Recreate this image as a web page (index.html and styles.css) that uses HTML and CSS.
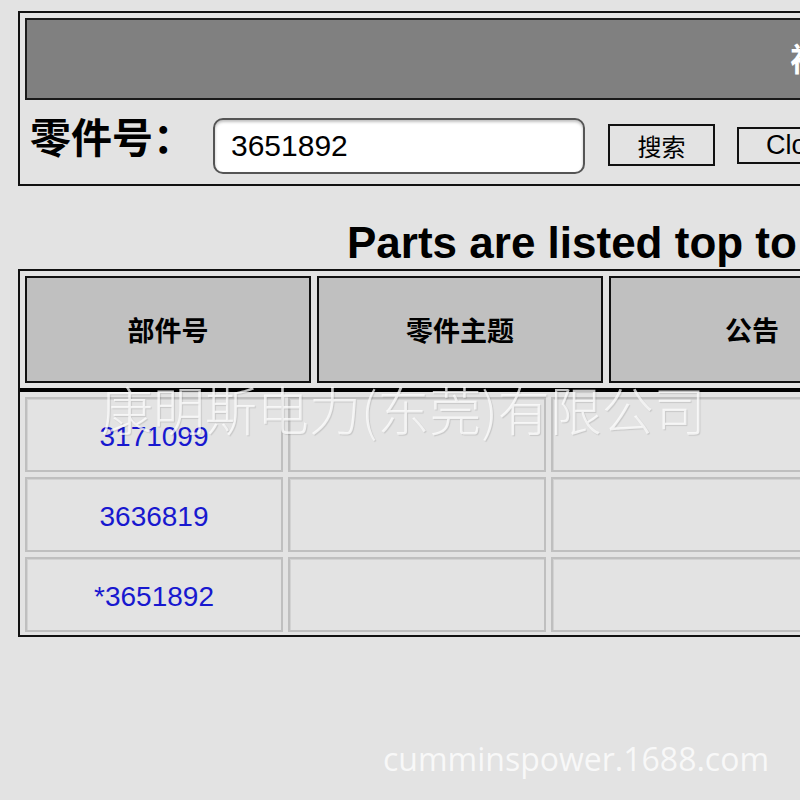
FILE: index.html
```html
<!DOCTYPE html>
<html lang="zh-CN">
<head>
<meta charset="utf-8">
<title>零件查询</title>
<link rel="stylesheet" href="styles.css">
</head>
<body>
<div class="page">
  <div class="search-box">
    <div class="banner"><span class="banner-title">视图零件查询</span></div>
    <div class="search-row">
      <span class="label">零件号：</span>
      <input class="part-input" type="text" value="3651892">
      <button class="btn btn-search">搜索</button>
      <button class="btn btn-close">Close</button>
    </div>
  </div>

  <h1 class="title">Parts are listed top to bottom</h1>

  <div class="parts">
    <div class="thead">
      <div class="th">部件号</div>
      <div class="th">零件主题</div>
      <div class="th">公告</div>
    </div>
    <div class="tbody">
      <div class="tr">
        <div class="td"><a class="link" href="#">3171099</a></div>
        <div class="td"></div>
        <div class="td"></div>
      </div>
      <div class="tr">
        <div class="td"><a class="link" href="#">3636819</a></div>
        <div class="td"></div>
        <div class="td"></div>
      </div>
      <div class="tr">
        <div class="td"><a class="link" href="#">*3651892</a></div>
        <div class="td"></div>
        <div class="td"></div>
      </div>
    </div>
  </div>
</div>

<div class="wm wm-company">康明斯电力(东莞)有限公司</div>
<div class="wm wm-site">cumminspower.1688.com</div>
</body>
</html>
```

FILE: styles.css
```css
html, body {
  margin: 0;
  padding: 0;
}
body {
  width: 800px;
  height: 800px;
  overflow: hidden;
  background: #e3e3e3;
  font-family: "Liberation Sans", Arial, "Noto Sans CJK SC", sans-serif;
  color: #000;
  position: relative;
}
.page {
  padding: 11px 0 0 18px;
}

/* search box */
.search-box {
  width: 1200px;
  height: 175px;
  box-sizing: border-box;
  border: 2px solid #111;
  border-right: none;
  padding: 5px 0 0 5px;
}
.banner {
  height: 82px;
  box-sizing: border-box;
  background: #808080;
  border: 2px solid #1a1a1a;
  position: relative;
}
.banner-title {
  position: absolute;
  left: 763px;
  top: 24px;
  color: #fff;
  font-weight: bold;
  font-size: 32px;
  line-height: 32px;
  white-space: nowrap;
}
.search-row {
  height: 84px;
  display: flex;
  align-items: flex-start;
}
.label {
  margin-left: 5px;
  margin-top: 14px;
  font-size: 41px;
  line-height: 50px;
  font-weight: bold;
  width: 183px;
  white-space: nowrap;
}
.part-input {
  margin-top: 18px;
  width: 372px;
  height: 56px;
  box-sizing: border-box;
  border: 2px solid #555;
  border-radius: 10px;
  background: #fff;
  box-shadow: inset 0 2px 3px rgba(0, 0, 0, 0.25);
  padding: 0 0 0 16px;
  font-family: "Liberation Sans", Arial, sans-serif;
  font-size: 30px;
  color: #000;
  outline: none;
}
.btn {
  box-sizing: border-box;
  background: #e3e3e3;
  border: 2px solid #111;
  border-radius: 0;
  color: #000;
  padding: 0;
  font-family: "Liberation Sans", Arial, "Noto Sans CJK SC", sans-serif;
}
.btn-search {
  margin-left: 23px;
  margin-top: 24px;
  width: 107px;
  height: 42px;
  font-size: 24px;
}
.btn-close {
  margin-left: 22px;
  margin-top: 27px;
  width: 130px;
  height: 37px;
  font-size: 27px;
  text-align: left;
  padding-left: 27px;
}

/* title */
.title {
  margin: 32px 0 1px 329px;
  font-size: 44px;
  line-height: 50px;
  height: 50px;
  font-weight: bold;
  white-space: nowrap;
}

/* parts table */
.parts {
  width: 1200px;
  box-sizing: border-box;
  border: 2px solid #111;
  border-right: none;
}
.thead {
  display: flex;
  gap: 6px;
  padding: 5px;
}
.th {
  width: 286px;
  height: 107px;
  box-sizing: border-box;
  flex: none;
  background: #c0c0c0;
  border: 2px solid #111;
  display: flex;
  align-items: center;
  justify-content: center;
  font-family: "Noto Sans CJK SC", sans-serif;
  font-size: 27px;
  font-weight: bold;
}
.tbody {
  border-top: 4px solid #000;
  padding: 5px 5px 3px 5px;
  display: flex;
  flex-direction: column;
  gap: 5px;
}
.tr {
  display: flex;
  gap: 5px;
}
.td {
  width: 258px;
  height: 75px;
  flex: none;
  box-sizing: border-box;
  border: 2px solid #bfbfbf;
  box-shadow: inset 1px 1px 0 #d2d2d2;
  display: flex;
  align-items: center;
  justify-content: center;
}
.link {
  color: #1818cf;
  text-decoration: none;
  font-size: 28px;
  margin-top: 5px;
}

/* watermarks */
.wm {
  position: absolute;
  white-space: nowrap;
  pointer-events: none;
}
.wm-company {
  left: 101px;
  top: 379px;
  font-family: "Noto Sans CJK SC", sans-serif;
  font-weight: 300;
  font-size: 52px;
  line-height: 60px;
  color: rgba(255, 255, 255, 0.75);
  text-shadow: 1px 1px 1px rgba(0, 0, 0, 0.12);
}
.wm-site {
  left: 383px;
  top: 737px;
  font-family: "Open Sans", "DejaVu Sans", sans-serif;
  font-size: 32px;
  line-height: 44px;
  color: rgba(255, 255, 255, 0.75);
}
```
